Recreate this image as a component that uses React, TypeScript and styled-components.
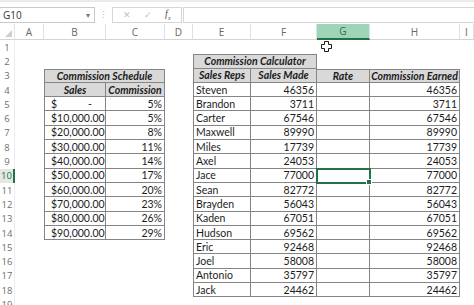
import * as React from 'react';
import styled, { createGlobalStyle, css } from 'styled-components';

const GlobalStyle = createGlobalStyle`
  html, body {
    margin: 0;
    padding: 0;
    background: #fff;
  }
  body {
    width: 474px;
    height: 305px;
    overflow: hidden;
  }
`;

const CELL_FONT = `Lato, 'Liberation Sans', sans-serif`;
const UI_FONT = `'Open Sans', 'Noto Sans', sans-serif`;
const BORDER = '#858585';
const GREEN = '#217346';

const COLS = ['A', 'B', 'C', 'D', 'E', 'F', 'G', 'H', 'I'];
const ROWS = Array.from({ length: 19 }, (_, i) => i + 1);
const SELECTED_COL = 6;
const SELECTED_ROW = 10;

const schedule: [string | null, string][] = [
    [null, '5%'],
    ['10,000.00', '5%'],
    ['20,000.00', '8%'],
    ['30,000.00', '11%'],
    ['40,000.00', '14%'],
    ['50,000.00', '17%'],
    ['60,000.00', '20%'],
    ['70,000.00', '23%'],
    ['80,000.00', '26%'],
    ['90,000.00', '29%'],
];

const reps: [string, number][] = [
    ['Steven', 46356],
    ['Brandon', 3711],
    ['Carter', 67546],
    ['Maxwell', 89990],
    ['Miles', 17739],
    ['Axel', 24053],
    ['Jace', 77000],
    ['Sean', 82772],
    ['Brayden', 56043],
    ['Kaden', 67051],
    ['Hudson', 69562],
    ['Eric', 92468],
    ['Joel', 58008],
    ['Antonio', 35797],
    ['Jack', 24462],
];

type Spec = {
    content?: React.ReactNode;
    span?: number;
    boxed?: boolean;
    bt?: boolean;
    bl?: boolean;
    head?: boolean;
    align?: 'left' | 'right' | 'center';
    money?: boolean;
};

const Money: React.FC<{ value: string | null }> = ({ value }) => (
    <MoneyWrap>
        <span>$</span>
        <MoneyValue $zero={value === null}>{value ?? '-'}</MoneyValue>
    </MoneyWrap>
);

// what sits in each cell of the two tables; 'skip' for cells covered by a merge
const specFor = (r: number, c: number): Spec | 'skip' => {
    // Commission Schedule, B3:C14
    if (r === 3 && c === 1) return { content: 'Commission Schedule', span: 2, head: true, boxed: true, bt: true, bl: true };
    if (r === 3 && c === 2) return 'skip';
    if (r === 4 && c === 1) return { content: 'Sales', head: true, boxed: true, bl: true };
    if (r === 4 && c === 2) return { content: 'Commission', head: true, boxed: true };
    if (r >= 5 && r <= 14 && c === 1) return { content: <Money value={schedule[r - 5][0]} />, boxed: true, bl: true, money: true };
    if (r >= 5 && r <= 14 && c === 2) return { content: schedule[r - 5][1], boxed: true, align: 'right' };

    // Commission Calculator, E2:H18
    if (r === 2 && c === 4) return { content: 'Commission Calculator', span: 2, head: true, boxed: true, bt: true, bl: true };
    if (r === 2 && c === 5) return 'skip';
    if (r === 3 && c === 4) return { content: 'Sales Reps', head: true, boxed: true, bl: true };
    if (r === 3 && c === 5) return { content: 'Sales Made', head: true, boxed: true };
    if (r === 3 && c === 6) return { content: 'Rate', head: true, boxed: true, bt: true };
    if (r === 3 && c === 7) return { content: 'Commission Earned', head: true, boxed: true, bt: true };
    if (r >= 4 && r <= 18) {
        const [name, sold] = reps[r - 4];
        if (c === 4) return { content: name, boxed: true, bl: true };
        if (c === 5) return { content: sold, boxed: true, align: 'right' };
        if (c === 6) return { boxed: true };
        if (c === 7) return { content: sold, boxed: true, align: 'right' };
    }
    return {};
};

const Cursor = () => (
    <CursorIcon width="11" height="11" viewBox="0 0 11 11">
        <path d="M3.5 0.5h4v3h3v4h-3v3h-4v-3h-3v-4h3z" fill="#fff" stroke="#1a1a1a" strokeWidth="1" />
    </CursorIcon>
);

const App: React.FC = () => {
    return (
        <>
            <GlobalStyle />
            <Window>
                <FormulaBar>
                    <NameBox>
                        <span>G10</span>
                        <Caret>▾</Caret>
                    </NameBox>
                    <Grip>⋮</Grip>
                    <FxBox>
                        <FxButton>✕</FxButton>
                        <FxButton>✓</FxButton>
                        <FxLabel>
                            f<sub>x</sub>
                        </FxLabel>
                    </FxBox>
                    <FormulaInput />
                </FormulaBar>
                <Sheet>
                    <Corner />
                    {COLS.map((col, i) => (
                        <ColHeader key={col} $active={i === SELECTED_COL}>
                            {col}
                        </ColHeader>
                    ))}
                    {ROWS.map((r) => (
                        <React.Fragment key={r}>
                            <RowHeader $active={r === SELECTED_ROW}>{r}</RowHeader>
                            {COLS.map((col, c) => {
                                const spec = specFor(r, c);
                                if (spec === 'skip') return null;
                                const selected = r === SELECTED_ROW && c === SELECTED_COL;
                                return (
                                    <Cell
                                        key={col}
                                        $span={spec.span}
                                        $boxed={spec.boxed}
                                        $bt={spec.bt}
                                        $bl={spec.bl}
                                        $head={spec.head}
                                        $align={spec.align}
                                        $money={spec.money}
                                        $selected={selected}
                                    >
                                        {spec.content}
                                        {r === 1 && c === SELECTED_COL && <Cursor />}
                                    </Cell>
                                );
                            })}
                        </React.Fragment>
                    ))}
                </Sheet>
            </Window>
        </>
    );
};

const Window = styled.div`
    width: 474px;
    height: 305px;
    overflow: hidden;
    background: #fff;
`;

const FormulaBar = styled.div`
    display: flex;
    align-items: center;
    height: 19px;
    padding-top: 3px;
    border-top: 2px solid #ebebeb;
    box-sizing: content-box;
    font-family: ${UI_FONT};
`;

const NameBox = styled.div`
    box-sizing: border-box;
    width: 95px;
    height: 16px;
    display: flex;
    align-items: center;
    justify-content: space-between;
    padding: 0 4px 0 3px;
    border: 1px solid #c9c9c9;
    border-left: none;
    font-size: 10px;
    color: #333;
`;

const Caret = styled.span`
    font-size: 8px;
    color: #777;
`;

const Grip = styled.span`
    width: 17px;
    text-align: center;
    font-size: 9px;
    color: #b5b5b5;
`;

const FxBox = styled.div`
    box-sizing: border-box;
    width: 70px;
    height: 16px;
    display: flex;
    align-items: center;
    justify-content: space-around;
    padding: 0 4px;
    border: 1px solid #d6d6d6;
`;

const FxButton = styled.span`
    font-size: 9px;
    color: #c3c3c3;
`;

const FxLabel = styled.span`
    font-family: 'Liberation Serif', serif;
    font-style: italic;
    font-size: 10px;
    color: #555;

    sub {
        font-size: 6px;
    }
`;

const FormulaInput = styled.div`
    flex: 1;
    height: 16px;
    box-sizing: border-box;
    margin-left: 1px;
    border: 1px solid #d6d6d6;
    border-right: none;
`;

const Sheet = styled.div`
    display: grid;
    grid-template-columns: 15px 29px 62px 59px 28px 58px 66px 53px 90px 1fr;
    grid-template-rows: 16px repeat(19, 14.3px);
`;

const Corner = styled.div`
    position: relative;
    border-bottom: 1px solid #d4d4d4;
    border-right: 1px solid #e2e2e2;
    box-sizing: border-box;

    &::after {
        content: '';
        position: absolute;
        right: 2px;
        bottom: 2px;
        border-style: solid;
        border-width: 0 0 7px 7px;
        border-color: transparent transparent #cfcfcf transparent;
    }
`;

const ColHeader = styled.div<{ $active?: boolean }>`
    box-sizing: border-box;
    display: flex;
    align-items: center;
    justify-content: center;
    font-family: ${UI_FONT};
    font-size: 10px;
    color: #666;
    border-right: 1px solid #e0e0e0;
    border-bottom: 1px solid #d4d4d4;

    ${(p) =>
        p.$active &&
        css`
            background: #9fd5b7;
            color: #3d6650;
            border-bottom: 2px solid ${GREEN};
        `}
`;

const RowHeader = styled.div<{ $active?: boolean }>`
    box-sizing: border-box;
    display: flex;
    align-items: center;
    justify-content: center;
    font-family: ${UI_FONT};
    font-size: 9.5px;
    color: #6e6e6e;
    border-right: 1px solid #ececec;

    ${(p) =>
        p.$active &&
        css`
            background: #e3e8e4;
            color: ${GREEN};
            border-right: 2px solid ${GREEN};
        `}
`;

const Cell = styled.div<{
    $span?: number;
    $boxed?: boolean;
    $bt?: boolean;
    $bl?: boolean;
    $head?: boolean;
    $align?: 'left' | 'right' | 'center';
    $money?: boolean;
    $selected?: boolean;
}>`
    grid-column: span ${(p) => p.$span ?? 1};
    position: relative;
    box-sizing: border-box;
    display: flex;
    align-items: center;
    justify-content: ${(p) => (p.$align === 'right' ? 'flex-end' : p.$align === 'center' ? 'center' : 'flex-start')};
    padding: 0 2px;
    font-family: ${CELL_FONT};
    font-size: 10.5px;
    color: #1c1c1c;
    white-space: nowrap;

    ${(p) =>
        p.$boxed &&
        css`
            border-right: 1px solid ${BORDER};
            border-bottom: 1px solid ${BORDER};
        `}
    ${(p) => p.$bt && `border-top: 1px solid ${BORDER};`}
    ${(p) => p.$bl && `border-left: 1px solid ${BORDER};`}
    ${(p) =>
        p.$head &&
        css`
            background: #d9d9d9;
            font-weight: 700;
            font-style: italic;
            justify-content: center;
        `}
    ${(p) => p.$money && `padding: 0 5px 0 6px;`}
    ${(p) =>
        p.$selected &&
        css`
            z-index: 2;
            outline: 2px solid ${GREEN};
            outline-offset: -1px;

            &::after {
                content: '';
                position: absolute;
                right: -3px;
                bottom: -3px;
                width: 4px;
                height: 4px;
                background: ${GREEN};
                border: 1px solid #fff;
            }
        `}
`;

const MoneyWrap = styled.div`
    flex: 1;
    display: flex;
    justify-content: space-between;
`;

const MoneyValue = styled.span<{ $zero?: boolean }>`
    padding-right: ${(p) => (p.$zero ? '8px' : '0')};
`;

const CursorIcon = styled.svg`
    position: absolute;
    left: 4px;
    top: 1px;
    z-index: 3;
`;

export default App;
